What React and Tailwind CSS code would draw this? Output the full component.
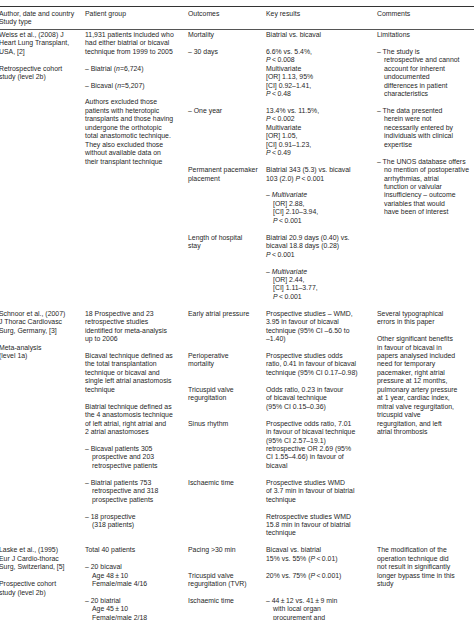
import React from 'react'

const P = (v) => (
  <>
    <i>P</i>
    {'\u2009<\u2009' + v}
  </>
)
const h = (...l) => ({ h: true, l })

const studies = [
  {
    c1: [['Weiss et al., (2008) J', 'Heart Lung Transplant,', 'USA, [2]'], ['Retrospective cohort', 'study (level 2b)']],
    c2: [
      ['11,931 patients included who', 'had either biatrial or bicaval', 'technique from 1999 to 2005'],
      [<>– Biatrial (<i>n</i>=6,724)</>],
      [<>– Bicaval (<i>n</i>=5,207)</>],
      [
        'Authors excluded those',
        'patients with heterotopic',
        'transplants and those having',
        'undergone the orthotopic',
        'total anastomotic technique.',
        'They also excluded those',
        'without available data on',
        'their transplant technique',
      ],
    ],
    subs: [
      { o: ['Mortality'], r: [['Biatrial vs. bicaval']] },
      {
        o: ['– 30 days'],
        r: [['6.6% vs. 5.4%,', P('0.008'), 'Multivariate', '[OR] 1.13, 95%', '[CI] 0.92–1.41,', P('0.48')]],
      },
      {
        o: ['– One year'],
        r: [['13.4% vs. 11.5%,', P('0.002'), 'Multivariate', '[OR] 1.05,', '[CI] 0.91–1.23,', P('0.49')]],
      },
      {
        o: ['Permanent pacemaker', 'placement'],
        r: [
          ['Biatrial 343 (5.3) vs. bicaval', <>103 (2.0) {P('0.001')}</>],
          h(<>– <i>Multivariate</i></>, '[OR] 2.88,', '[CI] 2.10–3.94,', P('0.001')),
        ],
      },
      {
        o: ['Length of hospital', 'stay'],
        r: [
          ['Biatrial 20.9 days (0.40) vs.', 'bicaval 18.8 days (0.28)', P('0.001')],
          h(<>– <i>Multivariate</i></>, '[OR] 2.44,', '[CI] 1.11–3.77,', P('0.001')),
        ],
      },
    ],
    c5: [
      ['Limitations'],
      h('– The study is', 'retrospective and cannot', 'account for inherent', 'undocumented', 'differences in patient', 'characteristics'),
      h('– The data presented', 'herein were not', 'necessarily entered by', 'individuals with clinical', 'expertise'),
      h(
        '– The UNOS database offers',
        'no mention of postoperative',
        'arrhythmias, atrial',
        'function or valvular',
        'insufficiency – outcome',
        'variables that would',
        'have been of interest'
      ),
    ],
  },
  {
    c1: [['Schnoor et al., (2007)', 'J Thorac Cardiovasc', 'Surg, Germany, [3]'], ['Meta-analysis', '(level 1a)']],
    c2: [
      ['18 Prospective and 23', 'retrospective studies', 'identified for meta-analysis', 'up to 2006'],
      ['Bicaval technique defined as', 'the total transplantation', 'technique or bicaval and', 'single left atrial anastomosis', 'technique'],
      ['Biatrial technique defined as', 'the 4 anastomosis technique', 'of left atrial, right atrial and', '2 atrial anastomoses'],
      h('– Bicaval patients 305', 'prospective and 203', 'retrospective patients'),
      h('– Biatrial patients 753', 'retrospective and 318', 'prospective patients'),
      h('– 18 prospective', '(318 patients)'),
    ],
    subs: [
      {
        o: ['Early atrial pressure'],
        r: [['Prospective studies – WMD,', '3.95 in favour of bicaval', 'technique (95% CI –6.50 to', '–1.40)']],
      },
      {
        o: ['Perioperative', 'mortality'],
        r: [['Prospective studies odds', 'ratio, 0.41 in favour of bicaval', 'technique (95% CI 0.17–0.98)']],
      },
      {
        o: ['Tricuspid valve', 'regurgitation'],
        r: [['Odds ratio, 0.23 in favour', 'of bicaval technique', '(95% CI 0.15–0.36)']],
      },
      {
        o: ['Sinus rhythm'],
        r: [
          [
            'Prospective odds ratio, 7.01',
            'in favour of bicaval technique',
            '(95% CI 2.57–19.1)',
            'retrospective OR 2.69 (95%',
            'CI 1.55–4.66) in favour of',
            'bicaval',
          ],
        ],
      },
      {
        o: ['Ischaemic time'],
        r: [
          ['Prospective studies WMD', 'of 3.7 min in favour of biatrial', 'technique'],
          ['Retrospective studies WMD', '15.8 min in favour of biatrial', 'technique'],
        ],
      },
    ],
    c5: [
      ['Several typographical', 'errors in this paper'],
      [
        'Other significant benefits',
        'in favour of bicaval in',
        'papers analysed included',
        'need for temporary',
        'pacemaker, right atrial',
        'pressure at 12 months,',
        'pulmonary artery pressure',
        'at 1 year, cardiac index,',
        'mitral valve regurgitation,',
        'tricuspid valve',
        'regurgitation, and left',
        'atrial thrombosis',
      ],
    ],
  },
  {
    c1: [['Laske et al., (1995)', 'Eur J Cardio-thorac', 'Surg, Switzerland, [5]'], ['Prospective cohort', 'study (level 2b)']],
    c2: [
      ['Total 40 patients'],
      h('– 20 bicaval', 'Age 48\u2009±\u200910', 'Female/male 4/16'),
      h('– 20 biatrial', 'Age 45\u2009±\u200910', 'Female/male 2/18'),
    ],
    subs: [
      { o: ['Pacing >30 min'], r: [['Bicaval vs. biatrial', <>15% vs. 55% ({P('0.01')})</>]] },
      { o: ['Tricuspid valve', 'regurgitation (TVR)'], r: [[<>20% vs. 75% ({P('0.001')})</>]] },
      {
        o: ['Ischaemic time'],
        r: [h('– 44\u2009±\u200912 vs. 41\u2009±\u20099 min', 'with local organ', 'procurement and', 'preservation')],
      },
    ],
    c5: [['The modification of the', 'operation technique did', 'not result in significantly', 'longer bypass time in this', 'study']],
  },
]

const Para = ({ p }) => {
  const hang = !Array.isArray(p)
  const lines = hang ? p.l : p
  return (
    <div>
      {lines.map((l, i) => (
        <div key={i} className={i > 0 && hang ? 'whitespace-nowrap pl-[7px]' : 'whitespace-nowrap'}>
          {l}
        </div>
      ))}
    </div>
  )
}

const Col = ({ paras }) => (
  <div className="flex flex-col gap-[8.45px]">
    {paras.map((p, i) => (
      <Para key={i} p={p} />
    ))}
  </div>
)

const Study = ({ s }) => (
  <div className="grid grid-cols-[86px_103px_189px_97px]">
    <Col paras={s.c1} />
    <Col paras={s.c2} />
    <div className="flex flex-col gap-[8.45px]">
      {s.subs.map((sub, i) => (
        <div key={i} className="grid grid-cols-[78px_111px]">
          <Para p={sub.o} />
          <Col paras={sub.r} />
        </div>
      ))}
    </div>
    <Col paras={s.c5} />
  </div>
)

const App = () => {
  return (
    <div className="w-[474px] h-[620px] overflow-hidden bg-white text-[#1f1f1f] text-[6.9px] leading-[8.45px] font-['Liberation_Sans',Arial,sans-serif]">
      {/* header */}
      <div className="mt-[6px] border-t border-b border-t-[#333] border-b-[#555] pt-[3px] pb-[2.5px]">
        <div className="grid grid-cols-[86px_103px_78px_111px_97px] ml-[-1px]">
          <div>
            <div className="whitespace-nowrap">Author, date and country</div>
            <div>Study type</div>
          </div>
          <div>Patient group</div>
          <div>Outcomes</div>
          <div>Key results</div>
          <div>Comments</div>
        </div>
      </div>

      {/* body */}
      <div className="ml-[-1px] pt-[0.5px] flex flex-col gap-[8.45px]">
        {studies.map((s, i) => (
          <Study key={i} s={s} />
        ))}
      </div>
    </div>
  )
}

export default App
